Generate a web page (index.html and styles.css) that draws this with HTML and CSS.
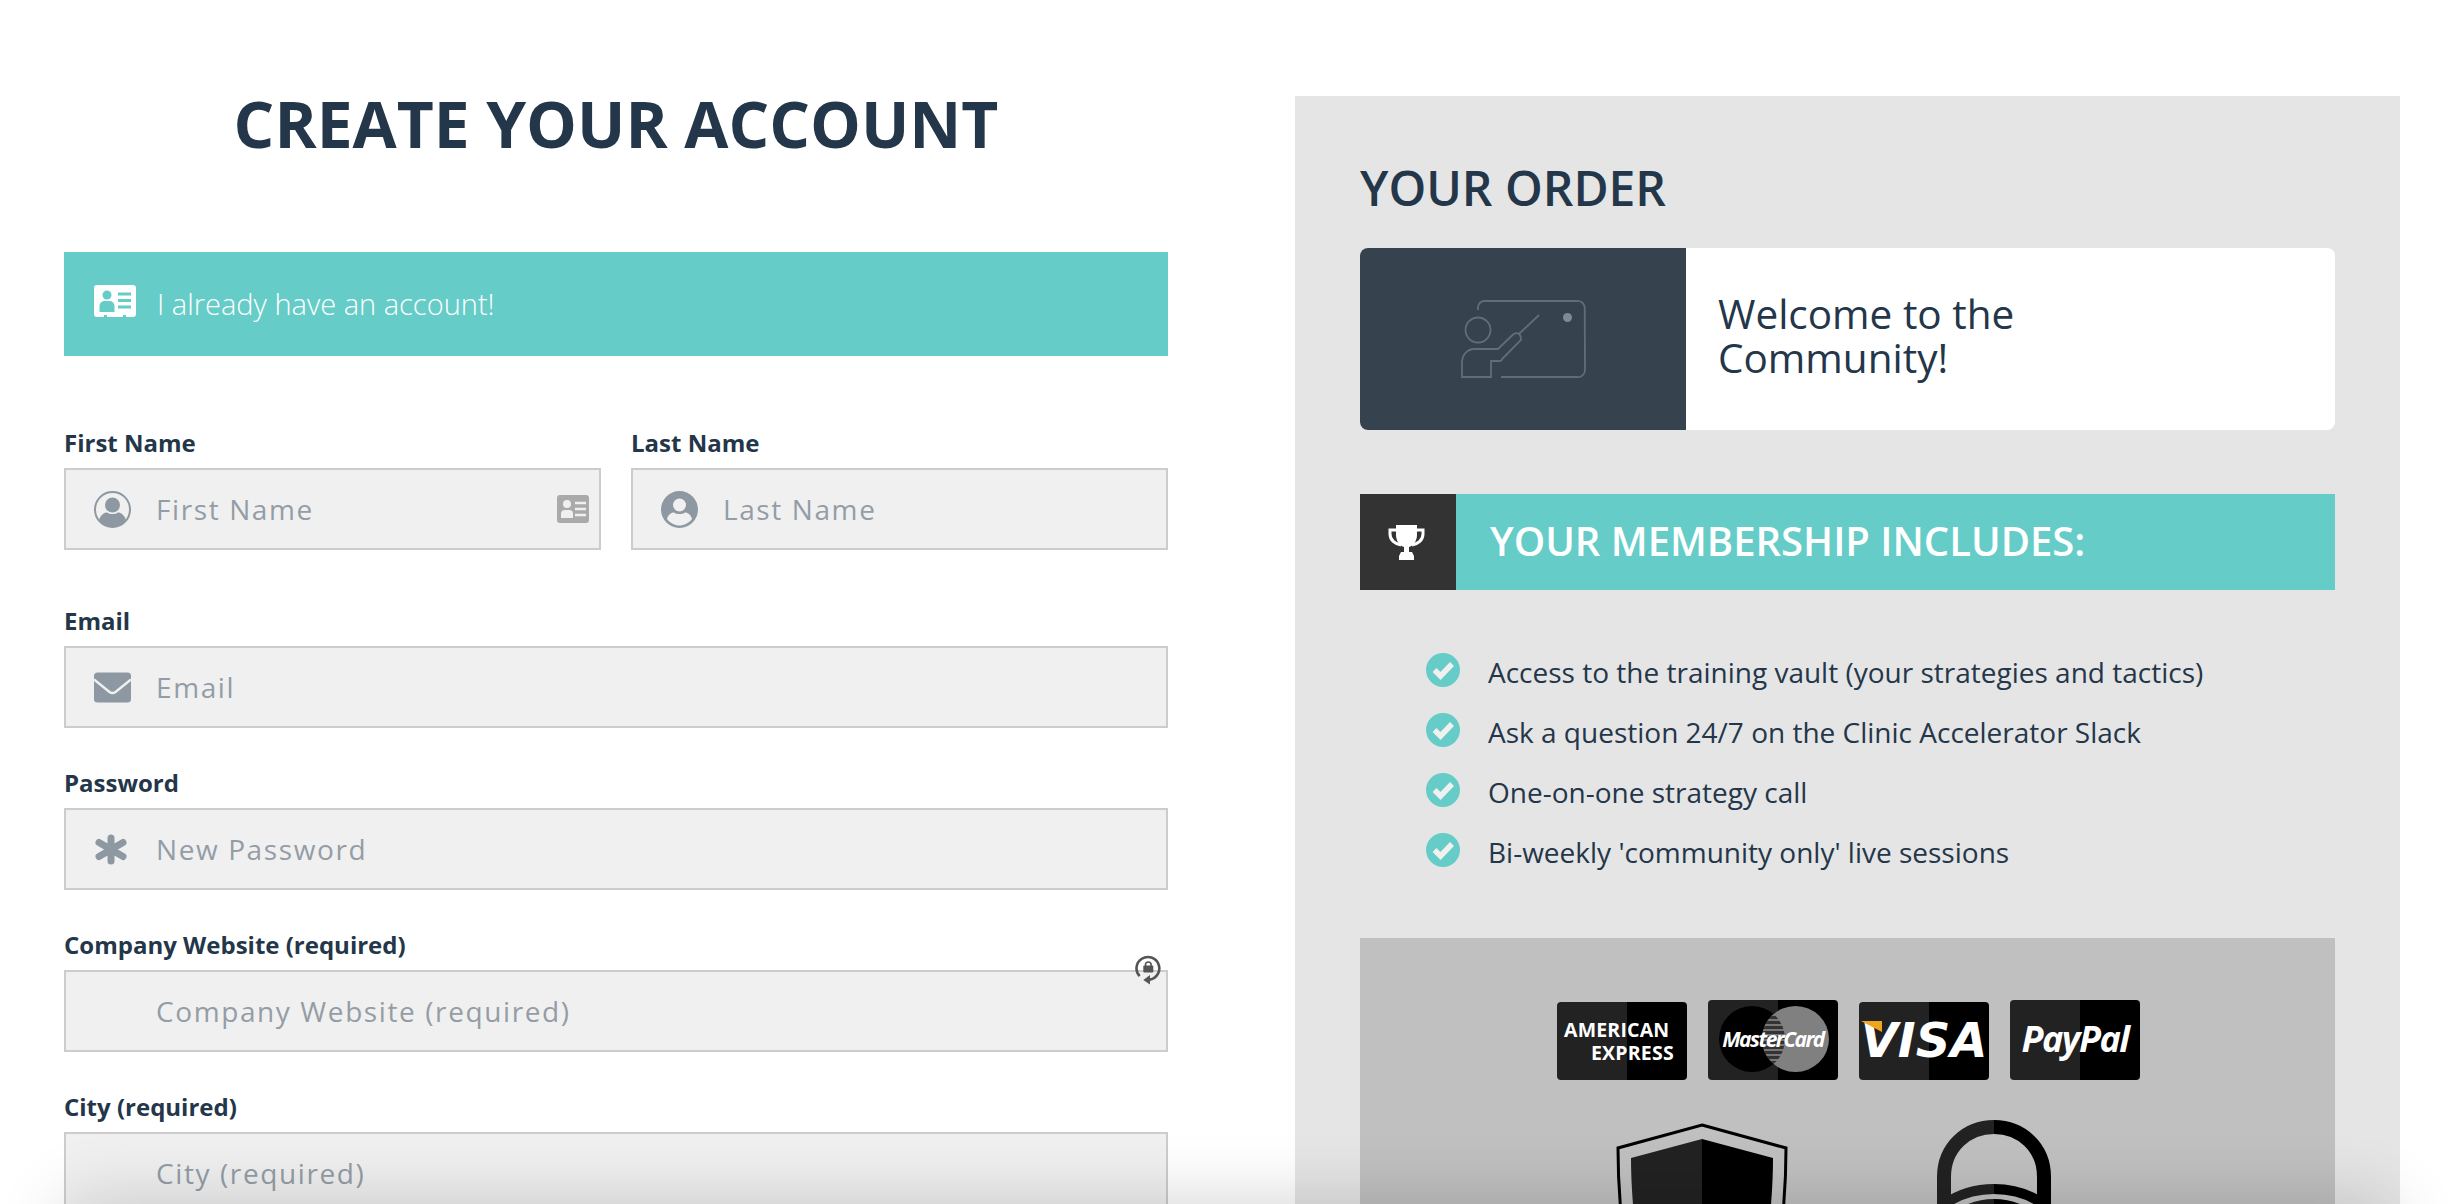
FILE: index.html
```html
<!DOCTYPE html>
<html lang="en">
  <head>
    <meta charset="UTF-8" />
    <meta name="viewport" content="width=device-width, initial-scale=1.0" />
    <title>Create Your Account</title>
    <link rel="stylesheet" href="styles.css">
  </head>
  <body>
    <div class="page">
      <div class="signup">
        <h1>CREATE YOUR ACCOUNT</h1>

        <a class="login-banner" href="#">
          <svg class="login-icon" viewBox="0 0 42 32">
            <path fill="#fff" d="M3 0h36a3 3 0 0 1 3 3v26a3 3 0 0 1-3 3h-7v-2h-3v2H13v-2h-3v2H3a3 3 0 0 1-3-3V3a3 3 0 0 1 3-3z"/>
            <circle cx="13" cy="10" r="4.500" fill="#65ccc8"/>
            <path fill="#65ccc8" d="M5.500 27v-6a5 5 0 0 1 5-5h5a5 5 0 0 1 5 5v6z"/>
            <path stroke="#65ccc8" stroke-width="3" d="M24 9h13M24 15.500h13M24 22h13"/>
          </svg>
          I already have an account!
        </a>

        <div class="field-row">
          <div class="field">
            <label for="firstName">First Name</label>
            <div class="input-wrap">
              <svg class="input-icon" viewBox="0 0 37 37">
                <circle cx="18.500" cy="18.500" r="17.500" fill="none" stroke="#8e98a2" stroke-width="2"/>
                <circle cx="18.500" cy="14" r="7.500" fill="#8e98a2"/>
                <path fill="#8e98a2" d="M5 29c2-6 6-7.500 8-7.500 3 2 8 2 11 0 2 0 6 1.500 8 7.500-3.500 4.500-8.500 7-13.500 7S8.500 33.500 5 29z"/>
              </svg>
              <input id="firstName" type="text" placeholder="First Name" />
              <svg class="autofill-icon" viewBox="0 0 32 28">
                <rect width="32" height="28" rx="3" fill="#aaa"/>
                <circle cx="10" cy="9" r="4" fill="#f0f0f0"/>
                <path fill="#f0f0f0" d="M4 23v-4a4 4 0 0 1 4-4h4a4 4 0 0 1 4 4v4z"/>
                <path stroke="#f0f0f0" stroke-width="2.500" d="M18 8h11M18 14h11M18 20h11"/>
              </svg>
            </div>
          </div>
          <div class="field">
            <label for="lastName">Last Name</label>
            <div class="input-wrap">
              <svg class="input-icon" viewBox="0 0 37 37">
                <circle cx="18.500" cy="18.500" r="18.500" fill="#8e98a2"/>
                <circle cx="18.500" cy="14" r="6.500" fill="#f0f0f0"/>
                <path fill="#f0f0f0" d="M6 28c1-4 4-6.500 7-6.500 3 2 8 2 11 0 3 0 6 2.500 7 6.500-3 4-8 6.500-12.500 6.500S9 32 6 28z"/>
              </svg>
              <input id="lastName" type="text" placeholder="Last Name" />
            </div>
          </div>
        </div>

        <div class="field">
          <label for="email">Email</label>
          <div class="input-wrap">
            <svg class="input-icon" viewBox="0 0 37 30">
              <rect width="37" height="30" rx="3.500" fill="#8e98a2"/>
              <path fill="none" stroke="#f0f0f0" stroke-width="2.500" d="M0 7l15.500 12.500q3 2 6 0L37 7"/>
            </svg>
            <input id="email" type="text" placeholder="Email" />
          </div>
        </div>

        <div class="field">
          <label for="password">Password</label>
          <div class="input-wrap">
            <svg class="input-icon" viewBox="0 0 37 37">
              <path stroke="#8e98a2" stroke-width="7" stroke-linecap="round" d="M17 7v23M5 11.500l24 14M29 11.500L5 25.500"/>
            </svg>
            <input id="password" type="password" placeholder="New Password" />
          </div>
        </div>

        <div class="field">
          <label for="website">Company Website (required)</label>
          <div class="input-wrap">
            <span class="input-icon"></span>
            <input id="website" type="text" placeholder="Company Website (required)" />
            <svg class="lock-badge" viewBox="0 0 26 30">
              <path fill="none" stroke="#555" stroke-width="2.600" d="M15 24.600A11.400 11.400 0 1 0 4.600 21.200"/>
              <path fill="#555" d="M15 20v9.500L8.300 25z"/>
              <rect x="8.300" y="10.500" width="10" height="7" rx="1" fill="#555"/>
              <path fill="none" stroke="#555" stroke-width="1.600" d="M10.500 11V9.800a2.800 2.800 0 0 1 5.600 0V11"/>
            </svg>
          </div>
        </div>

        <div class="field">
          <label for="city">City (required)</label>
          <div class="input-wrap">
            <span class="input-icon"></span>
            <input id="city" type="text" placeholder="City (required)" />
          </div>
        </div>
      </div>

      <div class="order">
        <h2>YOUR ORDER</h2>

        <div class="product">
          <div class="product-thumb">
            <svg viewBox="0 0 125 78" fill="none" stroke="#626d79" stroke-width="1.800">
              <path d="M17 10V7a6.500 6.500 0 0 1 7-6h92a7 7 0 0 1 7.700 6l.3 63a7 7 0 0 1-8 7H40"/>
              <circle cx="17" cy="30" r="12.500"/>
              <path d="M1 77V63c0-8 5-14 12.500-14H37l14.500-14c3-3 8.500-3 8.500 5L42 58c-1 2-2 3-3 3h-9v16z"/>
              <path d="M58 34l20-19"/>
              <circle cx="106.500" cy="17.500" r="4.500" fill="#7f8994" stroke="none"/>
            </svg>
          </div>
          <div class="product-name">Welcome to the Community!</div>
        </div>

        <div class="includes-bar">
          <div class="includes-icon">
            <svg viewBox="0 0 37 35">
              <path fill="none" stroke="#fff" stroke-width="3" d="M9 5H2v4c0 6 5 10 11 11M28 5h7v4c0 6-5 10-11 11"/>
              <path fill="#fff" d="M8 0h21v10c0 6-4 11-8 12v5h3l2 4v4H11v-4l2-4h3v-5C12 21 8 16 8 10z"/>
            </svg>
          </div>
          <div class="includes-title">YOUR MEMBERSHIP INCLUDES:</div>
        </div>

        <ul class="includes-list">
          <li>
            <svg class="check" viewBox="0 0 34 34">
              <circle cx="17" cy="17" r="17" fill="#65ccc8"/>
              <path fill="none" stroke="#f0f0f0" stroke-width="5.500" d="M8.500 17l6 6L26 11"/>
            </svg>
            Access to the training vault (your strategies and tactics)
          </li>
          <li>
            <svg class="check" viewBox="0 0 34 34">
              <circle cx="17" cy="17" r="17" fill="#65ccc8"/>
              <path fill="none" stroke="#f0f0f0" stroke-width="5.500" d="M8.500 17l6 6L26 11"/>
            </svg>
            Ask a question 24/7 on the Clinic Accelerator Slack
          </li>
          <li>
            <svg class="check" viewBox="0 0 34 34">
              <circle cx="17" cy="17" r="17" fill="#65ccc8"/>
              <path fill="none" stroke="#f0f0f0" stroke-width="5.500" d="M8.500 17l6 6L26 11"/>
            </svg>
            One-on-one strategy call
          </li>
          <li>
            <svg class="check" viewBox="0 0 34 34">
              <circle cx="17" cy="17" r="17" fill="#65ccc8"/>
              <path fill="none" stroke="#f0f0f0" stroke-width="5.500" d="M8.500 17l6 6L26 11"/>
            </svg>
            Bi-weekly 'community only' live sessions
          </li>
        </ul>

        <div class="trust">
          <div class="cards">
            <div class="card card-amex">
              <span>AMERICAN</span>
              <span class="amex-second">EXPRESS</span>
            </div>
            <div class="card card-mc">
              <i class="mc-left"></i>
              <i class="mc-right"><i class="mc-stripes"></i></i>
              <span>MasterCard</span>
            </div>
            <div class="card card-visa">
              <i class="visa-flag"></i>
              <span>VISA</span>
            </div>
            <div class="card card-paypal">
              <span>PayPal</span>
            </div>
          </div>
          <div class="seals">
            <svg class="seal-shield" viewBox="0 0 172 200">
              <path fill="none" stroke="#000" stroke-width="3" d="M86 2l84 23c0 40-4 90-14 140l-70 40-70-40C6 115 2 65 2 25z"/>
              <path fill="#222" d="M86 16v184L28 165C19 115 15 70 15 35z"/>
              <path fill="#000" d="M86 16l71 19c0 35-4 80-13 130l-58 35z"/>
            </svg>
            <svg class="seal-lock" viewBox="0 0 114 200">
              <path fill="none" stroke="#222" stroke-width="14" d="M7 100V57C7 27 30 7 57 7"/>
              <path fill="none" stroke="#000" stroke-width="14" d="M107 100V57c0-30-23-50-50-50"/>
              <path fill="none" stroke="#222" stroke-width="10" d="M8 84c14-10 32-15 49-15"/>
              <path fill="none" stroke="#000" stroke-width="10" d="M106 84C92 74 74 69 57 69"/>
              <path fill="#222" d="M57 79C35 79 14 90 0 106v94h57z"/>
              <path fill="#000" d="M57 79c22 0 43 11 57 27v94H57z"/>
            </svg>
          </div>
        </div>
      </div>
    </div>

    <div class="bottom-shadow"></div>
  </body>
</html>
```

FILE: styles.css
```css
html,
body {
  height: 100%;
  overflow: hidden;
}
body {
  margin: 0;
  font-family: "Open Sans", Arial, sans-serif;
  color: #243649;
  background-color: white;
}
.page {
  display: flex;
  align-items: flex-start;
  padding: 96px 56px 0 64px;
}
.signup {
  flex: none;
  width: 1104px;
  margin-right: 127px;
}
h1 {
  margin: -10px 0 90px;
  font-size: 64px;
  line-height: 76px;
  font-weight: 700;
  text-align: center;
}
.login-banner {
  display: flex;
  align-items: center;
  height: 104px;
  padding-left: 30px;
  padding-bottom: 2px;
  margin-bottom: 71px;
  box-sizing: border-box;
  background-color: #65ccc8;
  color: white;
  font-size: 29px;
  font-weight: 300;
  text-decoration: none;
}
.login-icon {
  width: 42px;
  height: 32px;
  margin-right: 21px;
  margin-top: -4px;
}
.field-row {
  display: flex;
  gap: 30px;
  margin-bottom: 16px;
}
.field-row .field {
  flex: 1;
}
.field {
  margin-bottom: 39px;
}
label {
  display: block;
  height: 41px;
  font-size: 24px;
  line-height: 32px;
  font-weight: 700;
}
.input-wrap {
  position: relative;
  display: flex;
  align-items: center;
  height: 82px;
  padding-left: 30px;
  box-sizing: border-box;
  background-color: #f0f0f0;
  border: 2px solid #ccc;
}
.input-icon {
  flex: none;
  width: 37px;
  height: 37px;
  margin-left: -2px;
  margin-right: 25px;
}
input {
  flex: 1;
  min-width: 0;
  padding: 0;
  border: none;
  outline: none;
  background: none;
  font-family: inherit;
  font-size: 28px;
  letter-spacing: 1.6px;
}
input::placeholder {
  color: #949da6;
  opacity: 1;
}
.autofill-icon {
  flex: none;
  width: 32px;
  height: 28px;
  margin-right: 10px;
}
.lock-badge {
  position: absolute;
  right: 5px;
  top: -17px;
  width: 26px;
  height: 30px;
}
.order {
  flex: none;
  width: 1105px;
  height: 1108px;
  box-sizing: border-box;
  padding: 54px 65px 0;
  background-color: #e5e5e5;
}
h2 {
  margin: 0 0 22px;
  font-size: 48px;
  line-height: 76px;
  font-weight: 600;
}
.product {
  display: flex;
  height: 182px;
  margin-bottom: 64px;
  border-radius: 8px;
  background-color: white;
  overflow: hidden;
}
.product-thumb {
  flex: none;
  display: flex;
  align-items: center;
  justify-content: center;
  width: 326px;
  background-color: #37424f;
}
.product-thumb svg {
  width: 125px;
  height: 78px;
}
.product-name {
  width: 340px;
  padding-left: 32px;
  padding-bottom: 6px;
  align-self: center;
  font-size: 40.500px;
  line-height: 44px;
}
.includes-bar {
  display: flex;
  height: 96px;
  background-color: #65ccc8;
}
.includes-icon {
  flex: none;
  display: flex;
  align-items: center;
  justify-content: center;
  width: 96px;
  background-color: #333;
}
.includes-icon svg {
  width: 37px;
  height: 35px;
  margin-left: -3px;
}
.includes-title {
  padding-left: 34px;
  color: white;
  font-size: 40px;
  line-height: 94px;
  font-weight: 600;
}
.includes-list {
  list-style: none;
  margin: 0 0 56px;
  padding: 52px 0 0 66px;
}
.includes-list li {
  display: flex;
  align-items: center;
  height: 60px;
  font-size: 28px;
}
.check {
  width: 34px;
  height: 34px;
  margin-right: 28px;
  margin-top: -4px;
}
.trust {
  height: 400px;
  padding-top: 62px;
  box-sizing: border-box;
  background-color: #c0c0c0;
}
.cards {
  display: flex;
  justify-content: center;
  align-items: flex-end;
  gap: 21px;
  padding-left: 2px;
}
.card {
  position: relative;
  width: 130px;
  height: 80px;
  border-radius: 4px;
  overflow: hidden;
  background: linear-gradient(to right, #222 54%, #000 54%);
  color: white;
  font-weight: 700;
}
.card-amex {
  display: flex;
  flex-direction: column;
  justify-content: center;
  height: 78px;
  padding-left: 7px;
  box-sizing: border-box;
  font-size: 19.500px;
  line-height: 23px;
  font-weight: 700;
  letter-spacing: 0.2px;
}
.amex-second {
  padding-left: 27px;
}
.card-mc span {
  position: absolute;
  left: 0;
  right: 0;
  top: 24px;
  text-align: center;
  font-size: 21px;
  font-style: italic;
  letter-spacing: -1.5px;
  line-height: 30px;
}
.mc-left,
.mc-right {
  position: absolute;
  top: 6px;
  height: 66px;
  border-radius: 50%;
}
.mc-left {
  left: 11px;
  width: 66px;
  background-color: #000;
}
.mc-right {
  left: 54px;
  width: 67px;
  overflow: hidden;
  background-color: #808080;
}
.mc-stripes {
  position: absolute;
  left: -43px;
  top: 0;
  width: 66px;
  height: 66px;
  border-radius: 50%;
  background: repeating-linear-gradient(to bottom, #333 0 3px, #777 3px 5px);
}
.card-visa {
  height: 78px;
}
.card-visa span {
  position: absolute;
  left: 0;
  right: 0;
  top: 7px;
  text-align: center;
  font-family: "DejaVu Sans", sans-serif;
  font-size: 48px;
  line-height: 62px;
  font-style: italic;
  font-weight: 700;
}
.visa-flag {
  position: absolute;
  left: 2px;
  top: 19px;
  z-index: 1;
  width: 21px;
  height: 11px;
  background-color: #f0a51e;
  clip-path: polygon(0 0, 100% 0, 100% 100%);
}
.card-paypal span {
  display: block;
  text-align: center;
  font-size: 36px;
  line-height: 78px;
  font-style: italic;
  font-weight: 700;
  letter-spacing: -1.5px;
}
.seals {
  display: flex;
  align-items: flex-start;
  margin-top: 40px;
  padding-left: 256px;
  gap: 149px;
}
.seal-shield {
  width: 172px;
  height: 200px;
  margin-top: 3px;
}
.seal-lock {
  width: 114px;
  height: 200px;
}
.bottom-shadow {
  position: fixed;
  left: 66px;
  right: 66px;
  bottom: -70px;
  height: 70px;
  box-shadow: 0 0 70px rgba(0, 0, 0, 0.19);
}
```
